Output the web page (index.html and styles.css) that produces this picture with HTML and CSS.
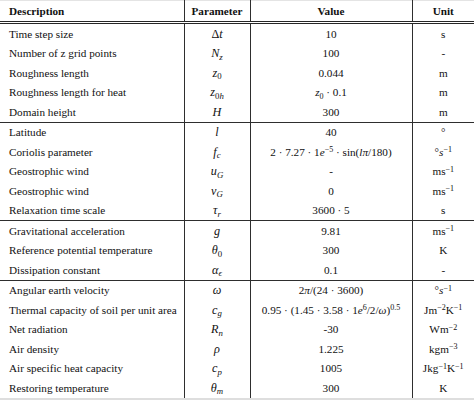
FILE: index.html
```html
<!DOCTYPE html>
<html>
<head>
<meta charset="utf-8">
<link rel="stylesheet" href="styles.css">
</head>
<body>
<table class="params">
  <colgroup>
    <col class="c-desc"><col class="c-par"><col class="c-val"><col class="c-unit">
  </colgroup>
  <thead>
    <tr class="head">
      <th class="desc">Description</th><th>Parameter</th><th>Value</th><th>Unit</th>
    </tr>
  </thead>
  <tbody class="grp">
    <tr><td class="desc">Time step size</td><td class="sym">Δ<i>t</i></td><td>10</td><td>s</td></tr>
    <tr><td class="desc">Number of z grid points</td><td class="sym"><i>N</i><sub><i>z</i></sub></td><td>100</td><td>-</td></tr>
    <tr><td class="desc">Roughness length</td><td class="sym"><i>z</i><sub>0</sub></td><td>0.044</td><td>m</td></tr>
    <tr><td class="desc">Roughness length for heat</td><td class="sym"><i>z</i><sub>0<i>h</i></sub></td><td><i>z</i><sub>0</sub> · 0.1</td><td>m</td></tr>
    <tr><td class="desc">Domain height</td><td class="sym"><i>H</i></td><td>300</td><td>m</td></tr>
  </tbody>
  <tbody class="grp">
    <tr><td class="desc">Latitude</td><td class="sym"><i>l</i></td><td>40</td><td>°</td></tr>
    <tr><td class="desc">Coriolis parameter</td><td class="sym"><i>f</i><sub><i>c</i></sub></td><td>2 · 7.27 · 1<i>e</i><sup>−5</sup> · sin(<i>lπ</i>/180)</td><td>°<i>s</i><sup>−1</sup></td></tr>
    <tr><td class="desc">Geostrophic wind</td><td class="sym"><i>u</i><sub><i>G</i></sub></td><td>-</td><td>ms<sup>−1</sup></td></tr>
    <tr><td class="desc">Geostrophic wind</td><td class="sym"><i>v</i><sub><i>G</i></sub></td><td>0</td><td>ms<sup>−1</sup></td></tr>
    <tr><td class="desc">Relaxation time scale</td><td class="sym"><i>τ</i><sub><i>r</i></sub></td><td>3600 · 5</td><td>s</td></tr>
  </tbody>
  <tbody class="grp">
    <tr><td class="desc">Gravitational acceleration</td><td class="sym"><i>g</i></td><td>9.81</td><td>ms<sup>−1</sup></td></tr>
    <tr><td class="desc">Reference potential temperature</td><td class="sym"><i>θ</i><sub>0</sub></td><td>300</td><td>K</td></tr>
    <tr><td class="desc">Dissipation constant</td><td class="sym"><i>α</i><sub><i>ϵ</i></sub></td><td>0.1</td><td>-</td></tr>
  </tbody>
  <tbody class="grp last">
    <tr><td class="desc">Angular earth velocity</td><td class="sym"><i>ω</i></td><td>2<i>π</i>/(24 · 3600)</td><td>°<i>s</i><sup>−1</sup></td></tr>
    <tr><td class="desc">Thermal capacity of soil per unit area</td><td class="sym"><i>c</i><sub><i>g</i></sub></td><td>0.95 · (1.45 · 3.58 · 1<i>e</i><sup>6</sup>/2/<i>ω</i>)<sup>0.5</sup></td><td>Jm<sup>−2</sup>K<sup>−1</sup></td></tr>
    <tr><td class="desc">Net radiation</td><td class="sym"><i>R</i><sub><i>n</i></sub></td><td>-30</td><td>Wm<sup>−2</sup></td></tr>
    <tr><td class="desc">Air density</td><td class="sym"><i>ρ</i></td><td>1.225</td><td>kgm<sup>−3</sup></td></tr>
    <tr><td class="desc">Air specific heat capacity</td><td class="sym"><i>c</i><sub><i>p</i></sub></td><td>1005</td><td>Jkg<sup>−1</sup>K<sup>−1</sup></td></tr>
    <tr><td class="desc">Restoring temperature</td><td class="sym"><i>θ</i><sub><i>m</i></sub></td><td>300</td><td>K</td></tr>
  </tbody>
</table>
</body>
</html>
```
FILE: styles.css
```css
html, body {
  margin: 0;
  padding: 0;
  background: #ffffff;
}

body {
  font-family: "Liberation Serif", "Times New Roman", Times, serif;
  font-size: 11.2px;
  color: #111111;
  width: 474px;
  height: 400px;
  overflow: hidden;
}

.params {
  width: 474px;
  border-collapse: collapse;
  table-layout: fixed;
  border-top: 1px solid #e4e4e4;
}

.c-desc { width: 184px; }
.c-par { width: 66px; }
.c-val { width: 162px; }
.c-unit { width: 62px; }

.params th,
.params td {
  padding: 0;
  text-align: center;
  vertical-align: middle;
  white-space: nowrap;
  line-height: 12px;
  border-left: 1px solid #2e2e2e;
}

.params th:first-child,
.params td:first-child {
  border-left: none;
}

.params .desc {
  text-align: left;
  padding-left: 9px;
}

.params .sym {
  font-size: 12.2px;
}

.head th {
  height: 20px;
  font-weight: bold;
  border-bottom: 3px double #262626;
}

.params td {
  height: 19.5px;
}

.grp {
  border-bottom: 1px solid #2e2e2e;
}

.grp.last {
  border-bottom: 2px solid #dedede;
}

sub, sup {
  font-size: 0.72em;
  line-height: 0;
  position: relative;
}

sub {
  vertical-align: baseline;
  top: 0.3em;
}

sup {
  vertical-align: baseline;
  top: -0.45em;
}

i {
  font-style: italic;
}
```
